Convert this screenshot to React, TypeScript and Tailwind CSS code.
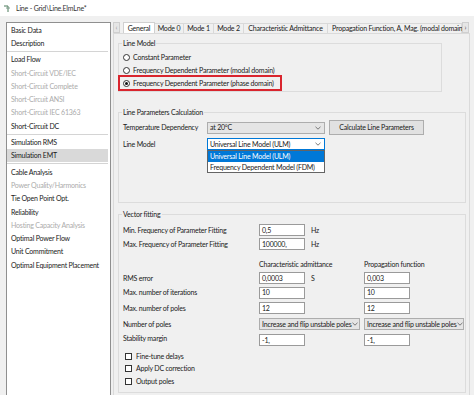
import React from "react";

const F = { fontFamily: '"Lato", "Noto Sans", sans-serif', letterSpacing: "-0.2px" };

function Chevron() {
  return (
    <svg width="6" height="4" viewBox="0 0 6 4" className="shrink-0">
      <path d="M0.5 0.8 L3 3.2 L5.5 0.8" fill="none" stroke="#6a6a6a" strokeWidth="0.9" />
    </svg>
  );
}

function Combo({ text, w, focus }: { text: string; w: string; focus?: boolean }) {
  return (
    <div
      className={`${w} h-[12px] flex items-center justify-between pl-[2px] pr-[3px] border whitespace-nowrap overflow-hidden ${
        focus ? "border-[#0078d7] bg-white" : "border-[#adadad] bg-[#e5e5e5]"
      }`}
    >
      <span>{text}</span>
      <Chevron />
    </div>
  );
}

function Input({ text, w = "w-[46px]" }: { text: string; w?: string }) {
  return (
    <div className={`${w} h-[12px] flex items-center pl-[2px] border border-[#9a9a9a] bg-white`}>{text}</div>
  );
}

function Radio({ checked, label }: { checked?: boolean; label: string }) {
  return (
    <div className="flex items-center h-[13px] gap-[3px]">
      <div className="w-[7px] h-[7px] rounded-full border border-[#333] bg-white flex items-center justify-center">
        {checked && <div className="w-[3px] h-[3px] rounded-full bg-[#111]" />}
      </div>
      <span>{label}</span>
    </div>
  );
}

function Check({ label }: { label: string }) {
  return (
    <div className="flex items-center h-[12.5px] gap-[4px] pl-[2px]">
      <div className="w-[7px] h-[7px] border border-[#333] bg-white" />
      <span>{label}</span>
    </div>
  );
}

function Group({ title, className, children }: { title: string; className: string; children: React.ReactNode }) {
  return (
    <div className={`relative border border-[#dcdcdc] ${className}`}>
      <div className="absolute left-[3px] top-[-6px] h-[11px] px-[1px] bg-[#f0f0f0] flex items-center">{title}</div>
      {children}
    </div>
  );
}

type Item = { t: string; d?: boolean; sel?: boolean } | "sep";
const items: Item[] = [
  { t: "Basic Data" },
  { t: "Description" },
  "sep",
  { t: "Load Flow" },
  { t: "Short-Circuit VDE/IEC", d: true },
  { t: "Short-Circuit Complete", d: true },
  { t: "Short-Circuit ANSI", d: true },
  { t: "Short-Circuit IEC 61363", d: true },
  { t: "Short-Circuit DC" },
  "sep",
  { t: "Simulation RMS" },
  { t: "Simulation EMT", sel: true },
  "sep",
  { t: "Cable Analysis" },
  { t: "Power Quality/Harmonics", d: true },
  { t: "Tie Open Point Opt." },
  { t: "Reliability" },
  { t: "Hosting Capacity Analysis", d: true },
  { t: "Optimal Power Flow" },
  { t: "Unit Commitment" },
  { t: "Optimal Equipment Placement" },
];

const tabs: [string, string][] = [
  ["Mode 0", "w-[29px]"],
  ["Mode 1", "w-[30px]"],
  ["Mode 2", "w-[30px]"],
  ["Characteristic Admittance", "w-[84px]"],
];

export default function App() {
  return (
    <div
      className="w-[474px] h-[395px] overflow-hidden bg-white flex flex-col text-[7px] text-[#1a1a1a] leading-none whitespace-nowrap"
      style={F}
    >
      {/* title */}
      <div className="h-[16px] flex items-center gap-[4px] pl-[3px] shrink-0 bg-white">
        <svg width="9" height="9" viewBox="0 0 9 9">
          <path d="M1 2 H5 V8" fill="none" stroke="#4a7a5a" strokeWidth="1" />
          <path d="M3 4 H7" fill="none" stroke="#7a9a88" strokeWidth="1" />
        </svg>
        <span className="text-[#333]">Line - Grid\Line.ElmLne*</span>
      </div>
      {/* body */}
      <div className="flex-1 bg-[#f0f0f0] flex pl-[6px] pt-[6px]">
        <div className="w-[105px] bg-white border border-[#8f8f8f] border-b-0 pt-[0.5px] pr-[2px] shrink-0">
          {items.map((it, i) =>
            it === "sep" ? (
              <div key={i} className="h-[3px] flex items-center">
                <div className="w-full h-px bg-[#d4d4d4]" />
              </div>
            ) : (
              <div
                key={i}
                className={`h-[13.3px] flex items-center pl-[4px] ${it.d ? "text-[#ababab]" : ""} ${
                  it.sel ? "bg-[#d9d9d9]" : ""
                }`}
              >
                {it.t}
              </div>
            )
          )}
        </div>
        {/* right */}
        <div className="flex-1 flex flex-col pl-[2px] pr-[4px]">
          {/* tabs */}
          <div className="h-[11px] flex items-end shrink-0">
            <div className="w-[7px] h-[11px] bg-[#e6e6e6] border border-[#cfcfcf] flex items-center justify-center text-[#999] text-[7px]">‹</div>
            <div className="w-[3px]" />
            <div className="w-[32px] h-[11px] bg-white border border-[#d0d0d0] border-b-0 flex items-center justify-center">General</div>
            {tabs.map(([t, w]) => (
              <div key={t} className={`${w} h-[10px] border border-[#d9d9d9] border-l-0 border-b-0 flex items-center justify-center`}>
                {t}
              </div>
            ))}
            <div className="h-[10px] pl-[4px] w-[134px] border border-[#d9d9d9] border-l-0 border-b-0 flex items-center">
              Propagation Function, A, Mag. (modal domain
            </div>
            <div className="w-[7px] h-[11px] bg-[#e6e6e6] border border-[#cfcfcf] flex items-center justify-center text-[#555] text-[7px]">›</div>
          </div>
          {/* page */}
          <div className="flex-1 border border-[#dadada] border-b-0 pl-[4px] pr-[1px] pt-[9px] flex flex-col">
            <Group title="Line Model" className="w-[324px] h-[49px] pl-[4px] pt-[7px]">
              <Radio label="Constant Parameter" />
              <Radio label="Frequency Dependent Parameter (modal domain)" />
              <div className="relative">
                <Radio checked label="Frequency Dependent Parameter (phase domain)" />
                <div className="absolute left-[-5px] top-[-2px] w-[164px] h-[16px] border-2 border-[#d9252e]" />
              </div>
            </Group>
            <Group title="Line Parameters Calculation" className="mt-[20px] w-[348px] h-[91px] pl-[4px] pt-[7px]">
              <div className="flex items-center h-[15px]">
                <span className="w-[84px]">Temperature Dependency</span>
                <Combo text="at 20°C" w="w-[118px]" />
                <div className="ml-[4px] w-[95px] h-[15px] bg-[#e1e1e1] border border-[#adadad] flex items-center justify-center">
                  Calculate Line Parameters
                </div>
              </div>
              <div className="flex items-center h-[12px] mt-[3px]">
                <span className="w-[84px]">Line Model</span>
                <div className="relative">
                  <Combo text="Universal Line Model (ULM)" w="w-[118px]" focus />
                  <div className="absolute left-0 top-[12px] w-[118px] bg-white border border-[#646464] z-10">
                    <div className="h-[11px] flex items-center pl-[2px] bg-[#0078d7] text-white">Universal Line Model (ULM)</div>
                    <div className="h-[10px] flex items-center pl-[2px]">Frequency Dependent Model (FDM)</div>
                  </div>
                </div>
              </div>
            </Group>
            <Group title="Vector fitting" className="mt-[11px] w-[348px] h-[179px] pl-[4px] pt-[8px]">
              <div className="flex items-center h-[14px]">
                <span className="w-[136px]">Min. Frequency of Parameter Fitting</span>
                <Input text="0,5" />
                <span className="ml-[6px]">Hz</span>
              </div>
              <div className="flex items-center h-[14px]">
                <span className="w-[136px]">Max. Frequency of Parameter Fitting</span>
                <Input text="100000," />
                <span className="ml-[6px]">Hz</span>
              </div>
              <div className="flex items-center h-[14px] mt-[6px]">
                <span className="w-[136px]" />
                <span className="w-[105px]">Characteristic admittance</span>
                <span>Propagation function</span>
              </div>
              <div className="flex items-center h-[14px]">
                <span className="w-[136px]">RMS error</span>
                <Input text="0,0003" />
                <span className="ml-[6px] w-[53px]">S</span>
                <Input text="0,003" />
              </div>
              <div className="flex items-center h-[15px]">
                <span className="w-[136px]">Max. number of iterations</span>
                <Input text="10" />
                <span className="w-[59px]" />
                <Input text="10" />
              </div>
              <div className="flex items-center h-[16px]">
                <span className="w-[136px]">Max. number of poles</span>
                <Input text="12" />
                <span className="w-[59px]" />
                <Input text="12" />
              </div>
              <div className="flex items-center h-[16px]">
                <span className="w-[136px]">Number of poles</span>
                <Combo text="Increase and flip unstable poles" w="w-[101px]" />
                <span className="w-[4px]" />
                <Combo text="Increase and flip unstable poles" w="w-[100px]" />
              </div>
              <div className="flex items-start h-[18px] pt-[2px]">
                <span className="w-[136px] mt-[1px]">Stability margin</span>
                <Input text="-1," />
                <span className="w-[59px]" />
                <Input text="-1," />
              </div>
              <Check label="Fine-tune delays" />
              <Check label="Apply DC correction" />
              <Check label="Output poles" />
            </Group>
          </div>
        </div>
      </div>
    </div>
  );
}
